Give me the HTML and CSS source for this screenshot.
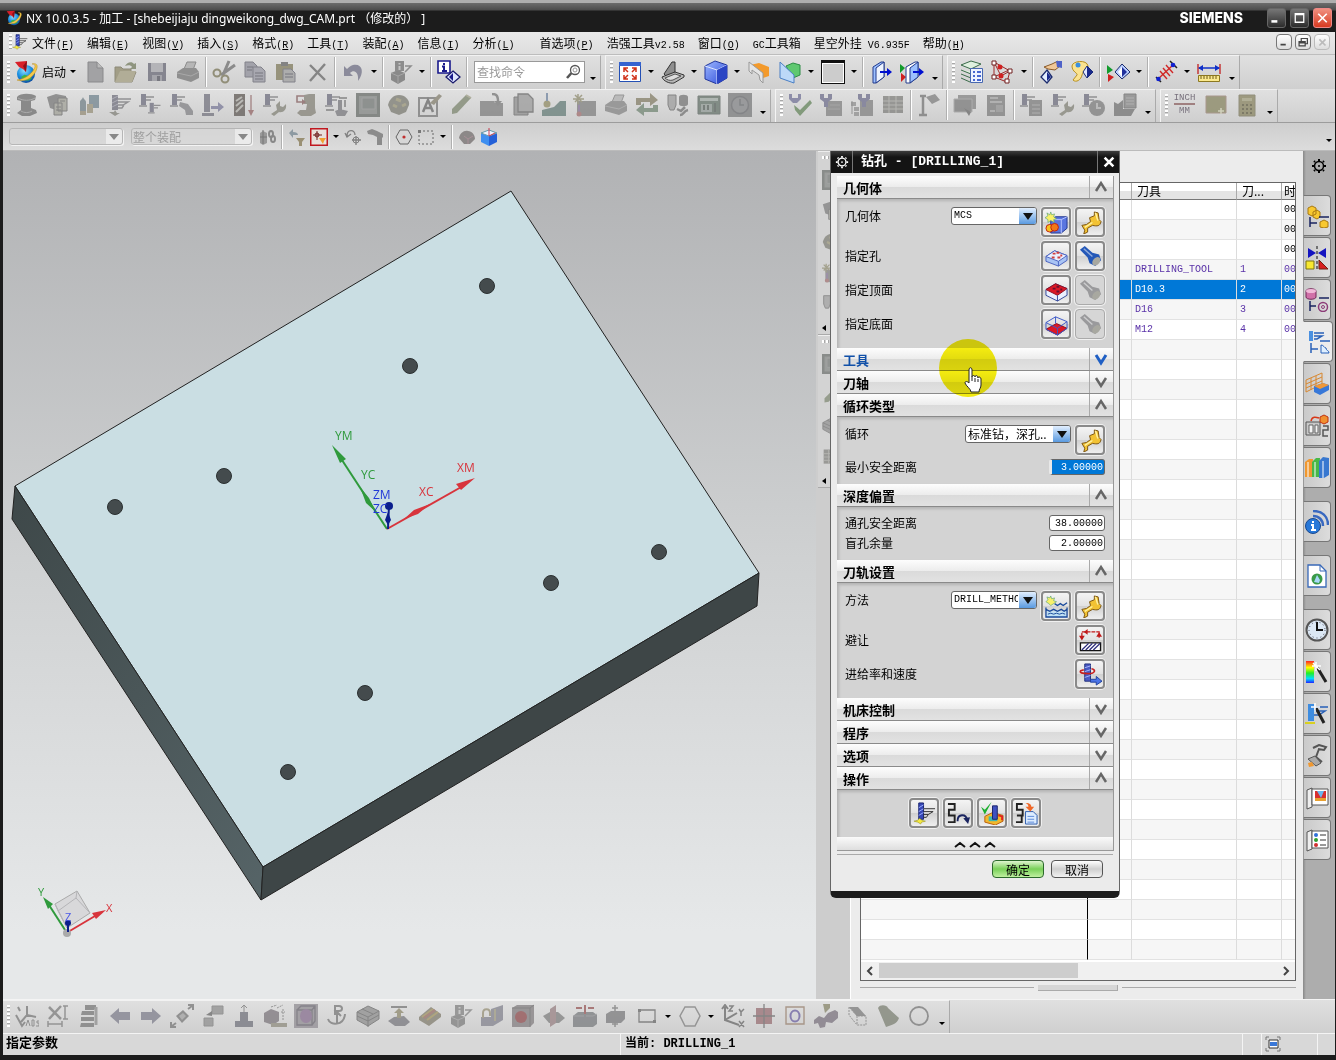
FILE: index.html
```html
<!DOCTYPE html>
<html lang="zh-CN">
<head>
  <meta charset="UTF-8">
  <meta name="viewport" content="width=device-width, initial-scale=1.0">
  <title>NX 10.0.3.5 - 加工</title>
  <link rel="stylesheet" href="styles.css">
</head>
<body>
  <!-- icon sprite -->
  <svg class="sprite" aria-hidden="true">
    <defs>
      <linearGradient id="blueCube" x1="0" y1="0" x2="1" y2="1"><stop offset="0" stop-color="#9db8ff"/><stop offset="1" stop-color="#2c49d8"/></linearGradient>
      <linearGradient id="rainbow" x1="0" y1="0" x2="0" y2="1"><stop offset="0" stop-color="#f22"/><stop offset=".3" stop-color="#ff0"/><stop offset=".55" stop-color="#2e2"/><stop offset=".8" stop-color="#0df"/><stop offset="1" stop-color="#22f"/></linearGradient>
      <radialGradient id="globe" cx=".4" cy=".3" r=".8"><stop offset="0" stop-color="#8fe0ff"/><stop offset=".5" stop-color="#1b8fe0"/><stop offset="1" stop-color="#0a3d8f"/></radialGradient>
    </defs>
    <symbol id="logo" viewBox="0 0 24 24"><circle cx="12" cy="14" r="9" fill="url(#globe)"/><path d="M7 17c3 4 8 5 11 1-3 1-5-4-8-3z" fill="#3bb34a"/><path d="M3 20c8 3 18-3 20-12 1-4-2-5-5-4 3 0 4 2 2 5-3 6-10 10-17 11z" fill="#f3c94a" stroke="#b98a1c" stroke-width=".5"/><path d="M1 2l12-1-1 11-3-3-4-2z" fill="#d8202a"/><path d="M13 1l-1 11-3-6z" fill="#8f0f18"/></symbol>
    <symbol id="bit" viewBox="0 0 24 24"><path d="M4 2h6v15H4z" fill="#7d7d88"/><path d="M4 6l6-3M4 10l6-3M4 14l6-3" stroke="#a6a6b0"/><path d="M10 6h13M10 9h10l-5 3h-5M10 15h4l2-3" fill="none" stroke="#858588" stroke-width="1.4"/><path d="M1 19h5l1-2 2 3h3l-5 3z" fill="#8d8d86"/></symbol>
    <symbol id="sbit" viewBox="0 0 24 24"><path d="M2 1h5v11H2z" fill="#7c7c8a"/><path d="M7 4h8M7 7h5M0 13h8" stroke="#858588" stroke-width="1.5"/></symbol>
    <symbol id="new" viewBox="0 0 24 24"><path d="M5 2h9l6 6v14H5z" fill="#a2a2a4" stroke="#8a8a8c"/><path d="M14 2v6h6" fill="#bbb" stroke="#8a8a8c"/></symbol>
    <symbol id="open" viewBox="0 0 24 24"><path d="M1 22V7h6l2 2h8v3h5l-4 10z" fill="#a19d86" stroke="#8d8a78"/><path d="M1 22l5-11h16l-4 11z" fill="#b1ad97"/><path d="M11 6c2-4 7-5 9-2l2-1v6h-6l2-2c-1-2-4-2-7-1z" fill="#8f957f"/></symbol>
    <symbol id="save" viewBox="0 0 24 24"><path d="M3 3h18v18H3z" fill="#85858f"/><path d="M6 3h12v9H6z" fill="#b4b4b8"/><path d="M7 15h10v6H7z" fill="#a4a4aa"/><path d="M12 16h3v5h-3z" fill="#77777f"/></symbol>
    <symbol id="print" viewBox="0 0 24 24"><path d="M8 9l3-7h9l-3 8z" fill="#b6b6b6" stroke="#8b8b8b"/><path d="M1 12l6-4h13l3 4v6l-8 4-14-4z" fill="#8f8f8f"/><path d="M1 13l14 3 8-4" fill="none" stroke="#a9a9a9"/></symbol>
    <symbol id="cut" viewBox="0 0 24 24"><path d="M17 1l-6 14M23 5L9 15" stroke="#8b8b8b" stroke-width="3"/><circle cx="5" cy="13" r="3.5" fill="none" stroke="#918e78" stroke-width="2"/><circle cx="13" cy="19" r="3.5" fill="none" stroke="#918e78" stroke-width="2"/></symbol>
    <symbol id="copy" viewBox="0 0 24 24"><path d="M2 2h8l4 4v11H2z" fill="#a2a2aa" stroke="#82828a"/><path d="M10 7h8l4 4v11H10z" fill="#a8a8b0" stroke="#82828a"/><path d="M4 7h6M4 10h5M12 13h8M12 16h8M12 19h8" stroke="#77777f"/></symbol>
    <symbol id="paste" viewBox="0 0 24 24"><path d="M2 4h17v16H2z" fill="#97937c"/><path d="M7 2h7v4H7z" fill="#838383"/><path d="M9 9h8l4 4v9H9z" fill="#adadad" stroke="#82828a"/><path d="M11 14h8M11 17h8" stroke="#77777f"/></symbol>
    <symbol id="del" viewBox="0 0 24 24"><path d="M5 5l15 15M20 4L5 21" stroke="#858585" stroke-width="2.4"/></symbol>
    <symbol id="undo" viewBox="0 0 24 24"><path d="M3 6v10h9l-3-3c4-4 9-1 8 8 7-9 4-18-5-16-3 1-4 2-6 4z" fill="#8b8b9b"/></symbol>
    <symbol id="icube" viewBox="0 0 24 24"><path d="M2 13l7-3 7 3v7l-7 4-7-4z" fill="#898989"/><path d="M2 13l7 3 7-3M9 16v8" stroke="#a5a5a5" fill="none"/><path d="M6 1h9v10H6z" fill="#8d8d8d"/><path d="M10.500 3v1.500M10.500 6v4" stroke="#c4c4c4" stroke-width="2"/><path d="M16 12l6-6h-6" fill="none" stroke="#8d8d8d" stroke-width="1.500"/></symbol>
    <symbol id="idia" viewBox="0 0 24 24"><path d="M1 1h12v12H1z" fill="#fff" stroke="#1a1a8c" stroke-width="1.600"/><path d="M7 3v2M5 6.500h2V11M5 11h5" stroke="#1a1a8c" stroke-width="2" fill="none"/><path d="M16 11l7 6-7 6-7-6z" fill="#dfe6ff" stroke="#1a1a6c" stroke-width="1.300"/><path d="M16 13v8l-4-4z" fill="#1a1a8c"/></symbol>
    <symbol id="find" viewBox="0 0 16 16"><circle cx="10" cy="6" r="4.500" fill="#fff" stroke="#555" stroke-width="1.300"/><circle cx="10" cy="6" r="2" fill="none" stroke="#999"/><path d="M6.500 9L2 14" stroke="#555" stroke-width="2.600"/></symbol>
    <symbol id="fit" viewBox="0 0 24 24"><path d="M1.500 2.500h21v19h-21z" fill="#fff" stroke="#2450b4"/><path d="M1 2h22v4H1z" fill="#3563d0"/><path d="M6 12V8h4M18 12V8h-4M6 15v4h4M18 15v4h-4M6 8l4 4M18 8l-4 4M6 19l4-4M18 19l-4-4" stroke="#d03018" stroke-width="1.500" fill="none"/></symbol>
    <symbol id="lap" viewBox="0 0 24 24"><path d="M3 14L11 2h3v10l-8 5z" fill="#8f8f8f" stroke="#333"/><path d="M1 17l5-2 8-3 9 3v2l-10 6c-4 1-11-2-12-6z" fill="#b8b8b8" stroke="#333"/><path d="M4 18l10-4 6 2-8 4c-3 1-6 0-8-2z" fill="#ddd" stroke="#555"/></symbol>
    <symbol id="cube" viewBox="0 0 24 24"><path d="M1 6l10-5 12 4v13l-10 6-12-5z" fill="url(#blueCube)" stroke="#23379c"/><path d="M1 6l12 4 10-5M13 10v14" fill="none" stroke="#dfe7ff"/><path d="M13 10l10-5v13l-10 6z" fill="#2b45c4"/></symbol>
    <symbol id="clipo" viewBox="0 0 24 24"><path d="M3 5l9-2 10 4v9l-6 2z" fill="#f39a2c"/><path d="M2 2l14 11v10l-3-3-1-5-7-5v4l-3-3z" fill="#e4e4e4" stroke="#999"/></symbol>
    <symbol id="clipg" viewBox="0 0 24 24"><path d="M8 6l7-3 7 2v10l-7 3z" fill="#5fc870" stroke="#2d8c45"/><path d="M2 2l14 13v8L2 18z" fill="#bcd8f8" stroke="#4a7fc4"/></symbol>
    <symbol id="sq" viewBox="0 0 24 24"><path d="M0 0h24v24H0z" fill="#111"/><path d="M1 3h22v20H1z" fill="#fff"/><path d="M2 4h20v18H2z" fill="#ccc"/></symbol>
    <symbol id="door" viewBox="0 0 24 24"><path d="M4 7l8-5h3v15l-8 6H4z" fill="#9cc0ff" stroke="#223a8c"/><path d="M7 8l8-6v15l-8 6z" fill="#eef4ff" stroke="#223a8c"/><path d="M11 12h8" stroke="#0010d0" stroke-width="2"/><path d="M18 8l5 4-5 4z" fill="#0010d0"/></symbol>
    <symbol id="doorg" viewBox="0 0 24 24"><path d="M0 4l5 4-5 5z" fill="#129b2c"/><path d="M1 13l5 4-5 5z" fill="#d02020"/><path d="M6 7l9-5h3v15l-8 6H6z" fill="#fff" stroke="#223a8c"/><path d="M10 8l8-6v15l-8 6z" fill="#9cc0ff" stroke="#223a8c"/><path d="M13 12h7" stroke="#0010d0" stroke-width="2"/><path d="M19 8l5 4-5 4z" fill="#0010d0"/></symbol>
    <symbol id="layers" viewBox="0 0 24 24"><path d="M1 5l10-4 10 3-10 5zM1 10l10 4 4-2M1 14l10 4M1 18l9 4" fill="#dff0df" stroke="#3b6b4a"/><path d="M10.500 8.500h12v14h-12z" fill="#eef3ff" stroke="#4868b0"/><path d="M13 12h2M17 12h4M13 16h2M17 16h4M13 20h2M17 20h4" stroke="#4868d0" stroke-width="2"/></symbol>
    <symbol id="net" viewBox="0 0 24 24"><path d="M3 2v15l13 5 3-11zM3 2l7 14 9-5M3 17l15-7" stroke="#a02828" fill="none"/><circle cx="9" cy="7" r="2.500" fill="#d02020"/><circle cx="10" cy="16" r="2.500" fill="#d02020"/><path d="M1 1h4v4H1zM1 15h4v4H1zM17 9h4v4h-4zM14 19h4v4h-4z" fill="#fff" stroke="#702020"/></symbol>
    <symbol id="handd" viewBox="0 0 24 24"><path d="M8 10l5 7-5 6-6-6z" fill="#e3eeff" stroke="#1a2a6c" stroke-width="1.300"/><path d="M8 12v9l4-4z" fill="#1a2a8c"/><path d="M5 7l8-3 6-3 2 5-5 4-7-1z" fill="#f1c898" stroke="#8a5a28"/><path d="M17 1h6v7l-5-1z" fill="#4f62c8"/></symbol>
    <symbol id="face" viewBox="0 0 24 24"><path d="M2 6c0-5 15-7 16 0 1 4-5 4-6 9-1 5-6 8-9 5l4-5c1-2-5-3-5-9z" fill="#fbe390" stroke="#b89020"/><circle cx="8" cy="5" r="2.500" fill="#3a8fe0"/><path d="M17 6l6 6-6 6-4-6z" fill="#dfe6ff" stroke="#1a2a6c"/><path d="M17 6l6 6-6 6z" fill="#1a2a8c"/></symbol>
    <symbol id="trid" viewBox="0 0 24 24"><path d="M1 5l6 5-6 4z" fill="#129b2c"/><path d="M2 14l6 3-6 5z" fill="#d02020"/><path d="M16 4l8 8-8 7-7-7z" fill="#bcd0ff" stroke="#1a2a6c"/><path d="M16 7v10l5-5z" fill="#20309c"/><path d="M16 7v10l-4-5z" fill="#fff"/></symbol>
    <symbol id="dist" viewBox="0 0 24 24"><path d="M2 17l5 5M16 1l7 7" stroke="#222" stroke-width="1.500"/><path d="M4 19L19 5M6 11l7 8M9 8l7 8M12 5l7 8" stroke="#d02828" stroke-width="1.400"/><circle cx="4.500" cy="19" r="2.300" fill="#1020d0"/><circle cx="19" cy="5" r="2.300" fill="#1020d0"/></symbol>
    <symbol id="ruler" viewBox="0 0 24 24"><path d="M1 4v10M23 4v10" stroke="#c02020" stroke-width="1.300"/><path d="M2 8h20" stroke="#1030c8" stroke-width="1.500"/><path d="M1 8l5-3v6zM23 8l-5-3v6z" fill="#1030c8"/><path d="M1.500 15.500h21v6h-21z" fill="#fbe98c" stroke="#8c7820"/><path d="M4 16v3M7 16v3M10 16v3M13 16v3M16 16v3M19 16v3" stroke="#6b5a18"/></symbol>

    <symbol id="a1" viewBox="0 0 24 24"><path d="M2 4c3-4 14-4 19-1l-1 4-4 1v7l5 2 1 3-7 3H7l-5-3 4-3V8L2 7z" fill="#7c7c7c"/><path d="M3 5c5 3 12 3 17 0M6 18c3 2 8 2 11 0" stroke="#a5a5a5" fill="none"/></symbol>
    <symbol id="a2" viewBox="0 0 24 24"><path d="M1 4l9-3 5 1 5 1v9l-7 6-9-3z" fill="#858585"/><path d="M12 5h9v13h-9zM8 10h8v12H8z" fill="#a8a8a0" stroke="#777"/><path d="M10 14h5M10 17h5M14 8h5" stroke="#777"/></symbol>
    <symbol id="a3" viewBox="0 0 24 24"><path d="M3 9c0-2 2-2 3-5 1 3 3 3 3 5v13H3z" fill="#7f8c92"/><path d="M3 18h6v4H3z" fill="#9d9684"/><path d="M12 2h10v13H12z" fill="#7f8f98"/><path d="M10 11h6v9h-6z" fill="#a09a86"/></symbol>
    <symbol id="a4" viewBox="0 0 24 24"><use href="#sbit" width="24" height="24"/><use href="#sbit" x="9" y="9" width="20" height="20"/></symbol>
    <symbol id="a5" viewBox="0 0 24 24"><use href="#sbit" width="24" height="24"/><path d="M10 9l8 2 5 7v4h-7l-1-5-6-4z" fill="#8d8d90"/></symbol>
    <symbol id="a6" viewBox="0 0 24 24"><path d="M3 1h6v18H3zM1 20h12v3H1z" fill="#80808a"/><path d="M10 13h7V9l6 5-6 5v-3h-7z" fill="#8686a0"/></symbol>
    <symbol id="a7" viewBox="0 0 24 24"><path d="M2 1h11v22H2z" fill="#6f6a66"/><path d="M4 8l6-4M4 13l7-6M4 19l7-7" stroke="#b5b5b0" stroke-width="2"/><path d="M19 2v16" stroke="#a08080" stroke-width="1.500"/><path d="M16 17h6l-3 6z" fill="#9c7474"/></symbol>
    <symbol id="wr" viewBox="0 0 24 24"><path d="M8 21l6-4-1-5 4-4v5l3 1 3-3c1 6-3 9-7 8l-5 4z" fill="#8e8e84"/></symbol>
    <symbol id="a8" viewBox="0 0 24 24"><use href="#sbit" width="24" height="24"/><use href="#wr" width="24" height="24"/></symbol>
    <symbol id="a9" viewBox="0 0 24 24"><path d="M10 2l5-1h6v14l1 5-5 3H7l-4-3 3-3h6l1-6h-3z" fill="#8f8d84"/><path d="M10 3H3v6h6" fill="none" stroke="#907070" stroke-width="1.600"/><path d="M8 6l4 3-4 3z" fill="#907070"/></symbol>
    <symbol id="a10" viewBox="0 0 24 24"><use href="#sbit" width="24" height="24"/><path d="M13 7h4v10h-4zM10 18l5-2 8 2-3 5h-8z" fill="#858589"/><path d="M1 17h8M20 7v7M14 5h8" stroke="#777" stroke-width="1.500"/></symbol>
    <symbol id="a11" viewBox="0 0 24 24"><path d="M0 0h24v24H0z" fill="#777b78"/><path d="M3 3h18v18H3z" fill="#8e918f"/><path d="M6 5h13v11H6z" fill="#818583" stroke="#999"/></symbol>
    <symbol id="a12" viewBox="0 0 24 24"><path d="M12 2c6 0 11 5 10 10l-3 7-7 3-8-3-3-7c1-5 5-10 11-10z" fill="#87877f"/><path d="M9 6l5 2M15 13l4-2M6 12l4 2" stroke="#a29e84" stroke-width="3"/></symbol>
    <symbol id="a13" viewBox="0 0 24 24"><path d="M1 5h18v18H1z" fill="none" stroke="#858585" stroke-width="2"/><path d="M5 19l5-12 5 12M7 15h6" stroke="#777" stroke-width="2.500" fill="none"/><path d="M12 10l9-9 3 2-8 9z" fill="#8f8b7c"/></symbol>
    <symbol id="a14" viewBox="0 0 24 24"><path d="M3 16L17 2l5 3L8 20l-5 1z" fill="#88907c"/><path d="M17 2l5 3" stroke="#a8a894" stroke-width="2"/></symbol>
    <symbol id="a15" viewBox="0 0 24 24"><path d="M0 8h14l1 2h8v13H0z" fill="#8a8a8a"/><path d="M12 1c5 0 6 2 6 8" stroke="#858585" stroke-width="2.500" fill="none"/><path d="M14 8h8l-4 5z" fill="#858585"/></symbol>
    <symbol id="a16" viewBox="0 0 24 24"><path d="M3 4h14v18H3z" fill="#999" stroke="#777"/><path d="M7 1h10l5 5v13H7z" fill="#a3a3a3" stroke="#777" stroke-width="1.300"/></symbol>
    <symbol id="a17" viewBox="0 0 24 24"><path d="M0 23V17l12-3 6-6h6v15z" fill="#748884"/><circle cx="5" cy="11" r="3.500" fill="#9a9674"/><path d="M5 0v8" stroke="#7f90a8" stroke-width="2"/></symbol>
    <symbol id="a18" viewBox="0 0 24 24"><path d="M4 8h19v15H4z" fill="#8b8b8b"/><path d="M5 1v10M0 6h11M2 2l7 7M9 2L2 9" stroke="#98957c" stroke-width="1.500"/><path d="M6 12v8" stroke="#9080a0" stroke-width="2"/><circle cx="6" cy="21" r="2.500" fill="#a87c7c"/></symbol>
    <symbol id="a19" viewBox="0 0 24 24"><path d="M1 12V5h14V0l8 7-8 6V9H6v3z" fill="#8f8a76"/><path d="M23 12v7H9v4l-8-6 8-7v5h9v-3z" fill="#7f9080"/></symbol>
    <symbol id="a20" viewBox="0 0 24 24"><path d="M2 2h8v10l-2 5H4l-2-5z" fill="#a5a5a5" stroke="#777"/><path d="M13 4c0-3 9-3 9 0v7c0 3-9 3-9 0z" fill="#838383"/><path d="M11 16l4 2 4-4M14 22c4 0 3-4 8-5" fill="none" stroke="#808080" stroke-width="2.500"/></symbol>
    <symbol id="a21" viewBox="0 0 24 24"><path d="M1 3h22v18H1z" fill="#748078" stroke="#6c7470"/><path d="M3 5h18v3H3z" fill="#a8b0ac"/><path d="M4 11h11v8H4z" fill="#9aa29e"/><path d="M7 12v5M11 12v5M18 10v9" stroke="#68706c" stroke-width="2"/></symbol>
    <symbol id="a22" viewBox="0 0 24 24"><path d="M0 0h24v24H0z" fill="#868788"/><circle cx="12" cy="12" r="8.500" fill="#8f9092" stroke="#76777a" stroke-width="1.500"/><path d="M12 6v6h4" stroke="#76777a" fill="none" stroke-width="1.500"/></symbol>
    <symbol id="b1" viewBox="0 0 24 24"><path d="M1 1v5l4 4h4l4-4V1h-3v4H4V1z" fill="#8080a0"/><path d="M6 12l6 5L22 7l2 3-12 13-5-6z" fill="#74906c"/></symbol>
    <symbol id="fk" viewBox="0 0 24 24"><path d="M1 1v5l4 3v5h4V9l4-3V1h-4v4H5V1z" fill="#7c7c96"/></symbol>
    <symbol id="b2" viewBox="0 0 24 24"><path d="M7 8h16v15H7z" fill="#8c8c8c"/><path d="M11 12h10M9 16h12" stroke="#9d9d9d"/><use href="#fk" width="24" height="24"/></symbol>
    <symbol id="b3" viewBox="0 0 24 24"><path d="M10 7h13v16H10z" fill="#8c8c8c"/><path d="M1 9h5v4H1zM4 14h5v4H4zM4 19h5v4H4z" fill="#999"/><path d="M2 8v13" stroke="#888"/><use href="#fk" x="7" width="24" height="24"/></symbol>
    <symbol id="b4" viewBox="0 0 24 24"><path d="M2 3h20v17H2z" fill="#8b8b88"/><path d="M2 8h20M2 12h20M2 16h20M8 3v17M15 3v17" stroke="#b0b0ac"/></symbol>
    <symbol id="b5" viewBox="0 0 24 24"><path d="M6 2v20M2 22h8M3 3h6" stroke="#838383" stroke-width="2.500"/><path d="M9 4l9-3 5 6-8 4z" fill="#8b8b8b"/></symbol>
    <symbol id="b6" viewBox="0 0 24 24"><path d="M5 2h18v14H5z" fill="#8f8f8f"/><path d="M1 6h18v13H1z" fill="#868686" stroke="#a5a5a5"/><path d="M11 15l5 8 2-4z" fill="#777"/></symbol>
    <symbol id="b7" viewBox="0 0 24 24"><path d="M3 2h18v21H3z" fill="#888"/><path d="M6 5h8M6 9h12M6 18h5" stroke="#aaa" stroke-width="2"/><path d="M12 12h7v7h-7z" fill="#9a9a9a"/></symbol>
    <symbol id="c1" viewBox="0 0 24 24"><use href="#sbit" width="24" height="24"/><path d="M9 7h13v16H9z" fill="#888"/><path d="M12 12h8M12 16h8M12 20h8" stroke="#aaa"/></symbol>
    <symbol id="c3" viewBox="0 0 24 24"><use href="#sbit" width="24" height="24"/><circle cx="15" cy="15" r="8" fill="#888"/><path d="M15 10v5h4" stroke="#b5b5b5" stroke-width="2" fill="none"/></symbol>
    <symbol id="c4" viewBox="0 0 24 24"><path d="M11 1h12v14H11z" fill="#8f8f8f" stroke="#777"/><path d="M1 9l4 2 5-4v9h12l-4 7H1z" fill="#808080"/><path d="M13 5h8M13 8h8M13 11h8" stroke="#aaa"/></symbol>
    <symbol id="d2" viewBox="0 0 24 24"><path d="M2 3h20v17H2z" fill="#929070" stroke="#a08c80"/><path d="M17 15v6M14 18h6" stroke="#d0d0b8" stroke-width="1.500"/></symbol>
    <symbol id="d3" viewBox="0 0 24 24"><path d="M4 2h16v21H4z" fill="#938f70" stroke="#85826c"/><path d="M7 5h10v3H7z" fill="#aaa88c"/><path d="M7 12h2M11 12h2M15 12h2M7 16h2M11 16h2M15 16h2M7 20h2M11 20h2M15 20h2" stroke="#6e6b55" stroke-width="2"/></symbol>

    <symbol id="s1" viewBox="0 0 18 18"><path d="M1 5l3-2 4 2v10l-4 2-3-2z" fill="#999"/><path d="M4 2v14M1 9h7" stroke="#777"/><ellipse cx="12" cy="6" rx="2" ry="3" fill="none" stroke="#888" stroke-width="2"/><ellipse cx="14" cy="11" rx="2" ry="3" fill="none" stroke="#888" stroke-width="2"/></symbol>
    <symbol id="s2" viewBox="0 0 18 18"><path d="M1 5l4-4v3c3 0 5 1 5 3H5v3z" fill="#8d9aa2"/><path d="M8 10h9l-3 4v4h-3v-4z" fill="#9a9074"/></symbol>
    <symbol id="s3" viewBox="0 0 18 18"><path d="M.75.75h16.500v16.500H.75z" fill="#e8e0dc" stroke="#c01820" stroke-width="1.500"/><path d="M7 3v9M3 7h9" stroke="#702020"/><circle cx="7" cy="7" r="2" fill="none" stroke="#702020"/><path d="M9 10h7l-2 3-1 3z" fill="#f0a030"/></symbol>
    <symbol id="s4" viewBox="0 0 18 18"><path d="M3 8c0-7 8-7 8-1M1 5l2 4 4-3M12 8v9M8 12h9" stroke="#808080" fill="none" stroke-width="1.300"/><circle cx="12" cy="12" r="3" fill="none" stroke="#808080"/></symbol>
    <symbol id="s5" viewBox="0 0 18 18"><path d="M1 3l5-2 5 2 6 3v3l-1 1v7h-5V9L7 7 2 6z" fill="#8b8b8b"/></symbol>
    <symbol id="s6" viewBox="0 0 18 18"><path d="M5 2h8l4 7-4 7H5L1 9z" fill="#d6d6d6" stroke="#666"/><circle cx="9" cy="9" r="1.600" fill="#c03030"/></symbol>
    <symbol id="s7" viewBox="0 0 18 18"><path d="M2 3h14v13H2z" fill="none" stroke="#666" stroke-dasharray="2 2"/><path d="M1 2h3v3H1z" fill="#777"/></symbol>
    <symbol id="s8" viewBox="0 0 18 18"><path d="M1 10c1-5 5-8 9-7 4 0 7 4 7 8l-5 5H6z" fill="#8c8888"/><path d="M6 8l4 3 5-3M10 11v5" stroke="#a89098" fill="none"/></symbol>
    <symbol id="s9" viewBox="0 0 18 18"><path d="M1 5l8 3v10L1 14z" fill="#3f8ff0"/><path d="M9 8l8-3v9l-8 4z" fill="#2561d8"/><path d="M1 5l8-3 8 3-8 3z" fill="#eef5ff" stroke="#69a"/><path d="M9 0v8l6-3" stroke="#d04050" fill="none"/></symbol>

    <symbol id="e1" viewBox="0 0 24 24"><path d="M12 2v9l9 2M12 11l-6 7M3 3l2 4M1 11l6 11 3-4" stroke="#858585" stroke-width="2" fill="none"/><path d="M11 22l2-6 2 6M17 16v6h2v-6zM24 17h-2v2h2v3h-3" stroke="#858585" fill="none"/></symbol>
    <symbol id="e2" viewBox="0 0 24 24"><path d="M3 3l12 12M15 2L3 15" stroke="#8a8a8a" stroke-width="2.500"/><path d="M19 2v13M17 2h5M17 15h5M2 20h14M2 17v6M16 17v6" stroke="#8a8a8a" stroke-width="1.500"/></symbol>
    <symbol id="e3" viewBox="0 0 24 24"><path d="M8 1h11v3l-2 2h-9zM5 7h12v4H4zM4 13h13v4H4zM4 19h13v4H3z" fill="#858585"/><path d="M19 3v18" stroke="#999" stroke-width="3"/></symbol>
    <symbol id="e4" viewBox="0 0 24 24"><path d="M2 12l9-8v4h11v8H11v4z" fill="#8a8a96"/></symbol>
    <symbol id="e6" viewBox="0 0 24 24"><path d="M6 12l7-6 6 6-7 7z" fill="#858585"/><path d="M9 12l4-3 3 3-4 4z" fill="#aaa"/><path d="M18 1h5v5M22 2l-4 3M6 23H1v-5M2 22l4-3" stroke="#858585" stroke-width="2" fill="none"/></symbol>
    <symbol id="e7" viewBox="0 0 24 24"><path d="M11 2h11v8H11zM3 14h9v8H3z" fill="#999" stroke="#888"/><path d="M5 11l6-4v5z" fill="#777"/></symbol>
    <symbol id="e8" viewBox="0 0 24 24"><path d="M8 8h8v9h5v6H3v-6h5z" fill="#7f8088"/><path d="M12 8V1M9 4l3-3 3 3" stroke="#858585" fill="none"/></symbol>
    <symbol id="e9" viewBox="0 0 24 24"><path d="M1 9l7-4 8 3v9l-6 4-9-3z" fill="#888388"/><path d="M8 19h16v4H8z" fill="#98958a"/><path d="M8 3l6-2M14 4l6-3M20 5v12M18 8h4" stroke="#888" stroke-dasharray="2 1"/></symbol>
    <symbol id="e10" viewBox="0 0 24 24"><path d="M0 0h24v24H0z" fill="#9a979c"/><path d="M3 6h15v15H3zM3 6l4-4h14v15l-3 4M18 6l3-4" stroke="#77747c" fill="none" stroke-width="1.300"/><ellipse cx="12" cy="12" rx="6" ry="7" fill="#917c98"/></symbol>
    <symbol id="e11" viewBox="0 0 24 24"><path d="M10 11V2h4c4 0 4 5 0 5h-3l5 5M12 8v11M3 15c2 7 16 7 17-5" stroke="#858585" fill="none" stroke-width="2"/></symbol>
    <symbol id="e12" viewBox="0 0 24 24"><path d="M1 8l11-6 11 5v8l-11 7-11-6z" fill="#989898" stroke="#777"/><path d="M1 8l11 5 11-6M1 12l11 5 11-6M12 13v10M6 5l11 5" stroke="#777" fill="none"/></symbol>
    <symbol id="e13" viewBox="0 0 24 24"><path d="M1 17l6-4 10-1 6 6-5 4H8z" fill="#85858a"/><path d="M4 3h16" stroke="#858585" stroke-width="2"/><path d="M10 14V9H7l5-5 5 5h-3v5z" fill="#98937c"/></symbol>
    <symbol id="e14" viewBox="0 0 24 24"><path d="M1 13L13 3l10 7v3l-12 9L1 16z" fill="#8d897c"/><path d="M4 13l11-8M9 16l11-8" stroke="#a89c70" stroke-width="2"/><path d="M6 14l11-8" stroke="#a07c74" stroke-width="2.500"/></symbol>
    <symbol id="e15" viewBox="0 0 24 24"><path d="M1 13h10V5l6-2 6-2v15l-10 6H1z" fill="#8e8e98"/><path d="M3 14V9c0-5 7-5 7 0v3" stroke="#a09a84" fill="none" stroke-width="2"/><path d="M15 5v12" stroke="#a5a18c" stroke-width="2"/></symbol>
    <symbol id="e16" viewBox="0 0 24 24"><path d="M1 4l5-3h17v18l-4 4H1z" fill="#8e8a8c"/><path d="M1 4h18v19M19 4l4-3" stroke="#777" fill="none"/><circle cx="10" cy="13" r="6" fill="#985e60"/></symbol>
    <symbol id="e17" viewBox="0 0 24 24"><path d="M1 12l7-4h8l7 6-6 5H7z" fill="#8b8b8b"/><path d="M8 5l6-4v18l-6 4z" fill="#a08c8e"/></symbol>
    <symbol id="e18" viewBox="0 0 24 24"><path d="M0 12l5-4h15l4 3v9l-4 3H0z" fill="#85878a"/><path d="M0 12h11M13 12h7l4-2" stroke="#9a9a9c" fill="none"/><path d="M3 4h6M21 4h-6M12 1v9" stroke="#a06868" stroke-width="2"/></symbol>
    <symbol id="e19" viewBox="0 0 24 24"><path d="M2 10l5-3h14v8l-4 4H2z" fill="#878789"/><path d="M11 1v22M8 4h6M8 20h6" stroke="#888" stroke-width="1.500"/></symbol>
    <symbol id="e20" viewBox="0 0 24 24"><path d="M4 6h16v12H4z" fill="none" stroke="#777" stroke-width="1.300"/><path d="M3 5h3v3H3zM18 16h3v3h-3z" fill="#777"/></symbol>
    <symbol id="e21" viewBox="0 0 24 24"><path d="M7 3h10l5 9-5 10H7L2 12z" fill="none" stroke="#8a8a8a" stroke-width="1.500"/></symbol>
    <symbol id="e22" viewBox="0 0 24 24"><path d="M4 3v13l14 5M4 16l12-7M1 5l3-4 3 4" stroke="#777" stroke-width="2" fill="none"/><path d="M8 2h4L8 7h4M18 5l2 3 3-3M20 8v4M18 17l5 6M23 17l-5 6" stroke="#777" stroke-width="1.500" fill="none"/></symbol>
    <symbol id="e23" viewBox="0 0 24 24"><path d="M4 4h16v16H4z" fill="#a07c80"/><path d="M12 0v24M1 12h22" stroke="#777" stroke-width="1.300"/></symbol>
    <symbol id="e24" viewBox="0 0 24 24"><path d="M3 3h18v17H3z" fill="none" stroke="#a08c7c" stroke-width="1.400"/><ellipse cx="12" cy="12" rx="4.500" ry="5.500" fill="none" stroke="#7a70a8" stroke-width="2"/></symbol>
    <symbol id="e25" viewBox="0 0 24 24"><path d="M0 16l5-4 5 2 4-5 7-3 3 2v6l-6 5-6-1-1 5-5 1-2-5-4 1z" fill="#87808a"/><path d="M9 0h7v4l-5 5z" fill="#929078"/></symbol>
    <symbol id="e26" viewBox="0 0 24 24"><path d="M4 3h9l8 9H12z" fill="#888"/><path d="M4 3v8l8 10h9v-9H12zM12 12v9" fill="none" stroke="#888" stroke-dasharray="2 1"/></symbol>
    <symbol id="e27" viewBox="0 0 24 24"><path d="M2 4c2-4 9-3 10 0l11 10c-2 6-7 7-13 9z" fill="#888c80"/></symbol>
    <symbol id="e28" viewBox="0 0 24 24"><circle cx="12" cy="12" r="9" fill="none" stroke="#858585" stroke-width="1.800"/></symbol>

    <symbol id="gear" viewBox="0 0 16 16"><circle cx="8" cy="8" r="4.500" fill="none" stroke="currentColor" stroke-width="1.500"/><circle cx="8" cy="8" r="1" fill="currentColor"/><path d="M8 1v2M8 13v2M1 8h2M13 8h2M3 3l1 1M12 12l1 1M3 13l1-1M12 4l1-1" stroke="currentColor" stroke-width="2"/></symbol>
    <symbol id="wrench" viewBox="0 0 24 24"><path d="M3 15l5-1 4-3-1-4 5-2V1l4 1 1 7 2 2c-1 5-4 5-9 4l-5 3v4l-4 2 1-4z" fill="#f2c233" stroke="#7a5410"/><path d="M17 2c2 3 1 6 3 8M6 17l8-5" stroke="#fff1a0" fill="none" stroke-width="1.500"/></symbol>
    <symbol id="geo" viewBox="0 0 24 24"><path d="M6 9l5-3h12v12l-6 5H6z" fill="#5a76e0" stroke="#24368f"/><path d="M6 9h11l6-3M17 9v14" stroke="#b9c6ff" fill="none"/><path d="M6 1l1 3 3-1-1 3 3 2-3 1 1 3-4-2-3 2V9L0 7l3-2-1-3 3 2z" fill="#f8f06a" stroke="#4a9a70" stroke-width=".6"/><circle cx="5" cy="18" r="4" fill="#f6c21c" stroke="#c02010"/><circle cx="10" cy="17" r="4" fill="#f07818" stroke="#c02010"/></symbol>
    <symbol id="holes" viewBox="0 0 24 24"><path d="M1 12l9-6 13 5v5l-9 6-13-5z" fill="#a9c4f4" stroke="#4a62c0"/><path d="M1 12l13 5 9-6-13-5z" fill="#eaf0ff" stroke="#4a62c0"/><path d="M14 17v5" stroke="#4a62c0"/><path d="M8 9h3M12 8h3M7 13h3M13 13h3M16 11h2" stroke="#d04040" stroke-width="2"/></symbol>
    <symbol id="top" viewBox="0 0 24 24"><path d="M1 11l10-6 12 5v7l-10 6-12-6z" fill="#eaf0ff" stroke="#33489c"/><path d="M1 11l12 6 10-7-12-5z" fill="#dc1826" stroke="#8c1020"/><path d="M13 17v6" stroke="#33489c"/><path d="M8 10h3M12 8h3M12 13h3M16 11h2" stroke="#6a1030" stroke-width="2"/></symbol>
    <symbol id="bottom" viewBox="0 0 24 24"><path d="M1 17l11-6 11 5-10 7z" fill="#dc1826" stroke="#8c1020"/><path d="M1 10l10-6 12 5v7l-10 7-12-6zM1 10l12 6 10-7M13 16v7M11 4v7" fill="none" stroke="#3c58c8"/></symbol>
    <symbol id="torch" viewBox="0 0 24 24"><path d="M1 5l5-4 8 7 7 2 2 6-6 6-6-3-2-6z" fill="currentColor"/><path d="M5 4l9 8" stroke="#fff" stroke-opacity=".5" stroke-width="1.500"/><ellipse cx="18" cy="17" rx="3.500" ry="5" transform="rotate(40 18 17)" class="lens"/></symbol>
    <symbol id="water" viewBox="0 0 24 24"><path d="M2 17h20v6H2z" fill="#bfe0f4"/><path d="M1 13v10h22V13M10 9l3 2 3-2 3 2 4-3M1 15l4 2 4-2 4 2 4-2 3 2 3-2" fill="none" stroke="#1a4a9c" stroke-width="1.400"/><path d="M3 20l3-1 3 1 3-1 3 1 3-1 3 1" stroke="#1a4a9c" fill="none"/><path d="M6 1l1 3 3-1-1 3 3 1-3 2-3 2-2-2-3-2 2-2-1-3 3 1z" fill="#f8f06a" stroke="#4a9a70" stroke-width=".6"/></symbol>
    <symbol id="avoid" viewBox="0 0 24 24"><path d="M3 8V3h18v6" stroke="#c01818" fill="none" stroke-width="1.300" stroke-dasharray="4 1"/><path d="M0 7h6l-3 5zM18 8h6l-3-5zM9 0v6L5 3z" fill="#c01818"/><path d="M1.500 14.500h21v8h-21z" fill="#fff" stroke="#111" stroke-width="1.400"/><path d="M3 22l7-7M7 22l7-7M11 22l7-7M15 22l7-7" stroke="#2b2b7c" stroke-width="1.400"/></symbol>
    <symbol id="feed" viewBox="0 0 24 24"><path d="M6 1h6v18H6z" fill="#4a5ac4" stroke="#20307c"/><path d="M6 5l6-2M6 9l6-2M6 15l6-2" stroke="#a9b8ff"/><path d="M13 6c5 1 4 5-3 5S0 10 2 8l3-1" fill="none" stroke="#c82020" stroke-width="1.800"/><path d="M12 17h6v-3l6 5-6 4v-3h-6z" fill="#4a74e8" stroke="#20409c"/></symbol>
    <symbol id="gen" viewBox="0 0 24 24"><path d="M6 1h5v17H6z" fill="#3748b8" stroke="#18246c"/><path d="M6 6l5-3M6 10l5-3M6 14l5-3" stroke="#9db0ff"/><path d="M11 7h12M11 10h10l-5 3h-5M11 16h3l2-3" stroke="#333" fill="none"/><path d="M1 20l4-1 2-2 2 2 4 1-4 1-1 2-3-2z" fill="#f4e840" stroke="#8a8410" stroke-width=".5"/></symbol>
    <symbol id="replay" viewBox="0 0 24 24"><path d="M1 2h7v6H2v6h6v7H1" fill="none" stroke="#222" stroke-width="2"/><path d="M11 20c0-8 9-8 10-1" fill="none" stroke="#1a2460" stroke-width="2"/><path d="M17 17l7-1-2 7z" fill="#1a2460"/></symbol>
    <symbol id="verify" viewBox="0 0 24 24"><path d="M4 15l8-4 11 3v6l-8 4-11-3z" fill="#f2b82c" stroke="#b86010"/><path d="M8 15h9v5H8z" fill="#40b8b0"/><path d="M12 4h5v14h-5z" fill="#3f51c0" stroke="#18246c"/><path d="M0 5l4 3 7-8-7 13z" fill="#1cb030"/><path d="M18 14l4 1v4" stroke="#e02020" stroke-width="2" fill="none"/></symbol>
    <symbol id="list" viewBox="0 0 24 24"><path d="M8 2H2v6h6v6H2M1 21h6v-7" fill="none" stroke="#222" stroke-width="2"/><path d="M11 10h8l4 4v9H11z" fill="#dcecff" stroke="#2c5cb0"/><path d="M13 15h7M13 18h7M13 21h7" stroke="#5a88d8"/><path d="M11 1c5 0 6 2 6 4h3l-4 5-5-5h3c0-2-1-3-3-4z" fill="#f06828"/></symbol>

    <symbol id="r1" viewBox="0 0 24 24"><path d="M3 4l4-2 4 2v6l-4 2-4-2zM8 8l4-2 3 2v5l-3 2-4-2zM15 18l4-2 4 2v5l-4 1-4-1z" fill="#f8c830" stroke="#a87810"/><path d="M5 13v10M5 19h7M14 13h10" stroke="#1a2460" stroke-width="1.500"/></symbol>
    <symbol id="r2" viewBox="0 0 24 24"><path d="M3 2l8 5-8 5zM21 2l-8 5 8 5z" fill="#1414c0"/><path d="M12 0v24" stroke="#111" stroke-dasharray="3 2"/><path d="M1 15h8v8H1z" fill="#f8e830" stroke="#7c7410"/><path d="M14 14l9 9h-9z" fill="#d82020" stroke="#702010"/></symbol>
    <symbol id="r3" viewBox="0 0 24 24"><path d="M1 3c0-3 10-3 10 0v6c0 3-10 3-10 0z" fill="#d070a8" stroke="#702858"/><ellipse cx="6" cy="3" rx="5" ry="2" fill="#f0b8d8"/><path d="M5 13v10M5 18h6M14 10h10" stroke="#1a2460" stroke-width="1.500"/><circle cx="18" cy="19" r="4.500" fill="none" stroke="#8c3c78" stroke-width="1.500"/><circle cx="18" cy="19" r="1.500" fill="none" stroke="#8c3c78"/></symbol>
    <symbol id="r4" viewBox="0 0 24 24"><path d="M3 1h4v10H3z" fill="#4a90e0"/><path d="M8 3h10M8 6h8l-5 3H8M5 13v10M5 19h7M14 11h10" stroke="#2860b8" stroke-width="1.500" fill="none"/><path d="M15 15v8h8c0-3-3-2-3-5-2 0-2-3-5-3z" fill="#e0f0ff" stroke="#2860b8"/></symbol>
    <symbol id="r5" viewBox="0 0 24 24"><path d="M1 8L17 1v11L1 20zM1 12l16-7M1 16l16-7M6 6v12M11 4v12" fill="none" stroke="#d88830"/><path d="M9 14l9-3 6 2v5l-9 5-6-3z" fill="#3878d8"/><path d="M9 14l6 3 9-4-6-2z" fill="#f09838"/></symbol>
    <symbol id="r6" viewBox="0 0 24 24"><path d="M1 8h14v13H1z" fill="#c8c8c8" stroke="#555"/><path d="M4 11h4v8H4zM10 11h3v8h-3z" fill="#f4f4f4" stroke="#666"/><path d="M18 12h5v4h-5v6h5" fill="none" stroke="#555" stroke-width="1.500"/><path d="M15 3l4-2 4 2v5l-4 2-4-2z" fill="#f09030" stroke="#c03010"/><path d="M6 7c1-5 5-4 8-3" stroke="#d83818" fill="none" stroke-width="1.500"/></symbol>
    <symbol id="r7" viewBox="0 0 24 24"><path d="M0 6l4-3h4l-1 18H0z" fill="#f09830"/><path d="M7 6l4-4h4l-1 19H7z" fill="#48b848"/><path d="M14 5l4-4 6 1v17l-5 3h-5z" fill="#3878d0"/><path d="M3 6v15M10 6v15M18 5v17" stroke="#fff"/></symbol>
    <symbol id="r8" viewBox="0 0 24 24"><path d="M8 6c6 0 10 4 10 10M8 1c9 0 15 5 15 14" fill="none" stroke="#3868c0" stroke-width="2.500"/><circle cx="8" cy="16" r="7.500" fill="#2878d8" stroke="#184890"/><path d="M8 11v2M6 15h2v5M6 20h5" stroke="#fff" stroke-width="2" fill="none"/></symbol>
    <symbol id="r9" viewBox="0 0 24 24"><path d="M3 1h12l6 6v16H3z" fill="#fff" stroke="#3868b8" stroke-width="1.300"/><path d="M15 1v6h6" fill="none" stroke="#3868b8"/><circle cx="12" cy="15" r="5.500" fill="#3a9a48"/><path d="M12 11l3 5-1 3-5-1z" fill="#a8d8f8"/></symbol>
    <symbol id="r10" viewBox="0 0 24 24"><circle cx="12" cy="12" r="10.500" fill="#dce8f4" stroke="#555" stroke-width="2"/><path d="M12 4v8h6" stroke="#111" stroke-width="2" fill="none"/><circle cx="12" cy="12" r="8" fill="none" stroke="#445" stroke-dasharray="1 3"/></symbol>
    <symbol id="r11" viewBox="0 0 24 24"><path d="M1 1h8v22H1z" fill="url(#rainbow)"/><path d="M12 7l9 15" stroke="#222" stroke-width="3"/><path d="M11 2v9M7 6h9M8 3l7 7" stroke="#fff" stroke-width="1.500"/></symbol>
    <symbol id="r12" viewBox="0 0 24 24"><path d="M3 2h6v17H3z" fill="#3d8ce0"/><path d="M9 5h14M9 9h11l-6 4H9" stroke="#2860b8" fill="none" stroke-width="1.500"/><path d="M11 6l8 15" stroke="#222" stroke-width="3"/><path d="M10 1v9M6 5h9" stroke="#fff" stroke-width="1.500"/><path d="M0 21h10" stroke="#d8d020" stroke-width="2"/></symbol>
    <symbol id="r13" viewBox="0 0 24 24"><path d="M8 4l6-3 7 2-2 3-6-1M14 5l-3 8 6 5" fill="none" stroke="#555" stroke-width="2"/><path d="M3 15l7-3 6 7-5 3z" fill="#aaa" stroke="#555"/><path d="M3 19l4-1 2 4-5 1z" fill="#f09830"/></symbol>
    <symbol id="r14" viewBox="0 0 24 24"><path d="M2 4l5-2v19l-5 2z" fill="#eee" stroke="#555"/><path d="M7 3h16v16H7z" fill="#fff" stroke="#555"/><path d="M10 5h11v10H10z" fill="#d83030"/><path d="M12 5h7l-3 7z" fill="#68b8f0"/><path d="M10 12h11v3H10z" fill="#e8a030"/></symbol>
    <symbol id="r15" viewBox="0 0 24 24"><path d="M2 4l5-2v19l-5 2z" fill="#eee" stroke="#555"/><path d="M7 3h16v17H7z" fill="#fff" stroke="#555"/><circle cx="11" cy="7" r="2" fill="#3070d8"/><circle cx="11" cy="12" r="2" fill="#30a030"/><circle cx="11" cy="17" r="2" fill="#d03030"/><path d="M15 7h6M15 12h6M15 17h6" stroke="#333"/></symbol>
  </svg>

  <header class="titlebar">
    <svg class="logo"><use href="#logo"/></svg>
    <span class="title">NX 10.0.3.5 - 加工 - [shebeijiaju dingweikong_dwg_CAM.prt （修改的） ]</span>
    <span class="brand">SIEMENS</span>
    <div class="winbtns">
      <button title="Minimize"><svg viewBox="0 0 20 20"><path d="M4 14h7" stroke="#fff" stroke-width="3"/></svg></button>
      <button title="Maximize"><svg viewBox="0 0 20 20"><path d="M5 5h10v10H5zM5 6h10" fill="none" stroke="#fff" stroke-width="1.500"/></svg></button>
      <button title="Close" class="close"><svg viewBox="0 0 20 20"><path d="M5 5l10 10M15 5L5 15" stroke="#fff" stroke-width="2"/></svg></button>
    </div>
  </header>

  <div class="frame">
    <nav class="menubar">
      <i class="grip"></i>
      <svg class="menu-icon"><use href="#gen"/></svg>
      <a href="#">文件<span class="mono">(<u>F</u>)</span></a>
      <a href="#">编辑<span class="mono">(<u>E</u>)</span></a>
      <a href="#">视图<span class="mono">(<u>V</u>)</span></a>
      <a href="#">插入<span class="mono">(<u>S</u>)</span></a>
      <a href="#">格式<span class="mono">(<u>R</u>)</span></a>
      <a href="#">工具<span class="mono">(<u>T</u>)</span></a>
      <a href="#">装配<span class="mono">(<u>A</u>)</span></a>
      <a href="#">信息<span class="mono">(<u>I</u>)</span></a>
      <a href="#" class="wide">分析<span class="mono">(<u>L</u>)</span></a>
      <a href="#">首选项<span class="mono">(<u>P</u>)</span></a>
      <a href="#">浩强工具<span class="mono">v2.58</span></a>
      <a href="#">窗口<span class="mono">(<u>O</u>)</span></a>
      <a href="#"><span class="mono">GC</span>工具箱</a>
      <a href="#">星空外挂<span class="mono"> V6.935F</span></a>
      <a href="#">帮助<span class="mono">(<u>H</u>)</span></a>
      <div class="mdi">
        <button title="Minimize"><svg viewBox="0 0 16 16"><path d="M4 11h6" stroke="#444" stroke-width="2"/></svg></button>
        <button title="Restore"><svg viewBox="0 0 16 16"><path d="M6 7V4h7v6h-2M3.500 7.500h7v5h-7zM4 9h6" fill="none" stroke="#444" stroke-width="1.400"/></svg></button>
        <button title="Close" disabled><svg viewBox="0 0 16 16"><path d="M5 5l7 7M12 5l-7 7" stroke="#bbb" stroke-width="2"/></svg></button>
      </div>
    </nav>

    <div class="toolrow">
      <div class="group">
        <i class="grip"></i>
        <button class="start"><svg><use href="#logo"/></svg>启动<i class="tri"></i></button>
        <button title="New"><svg><use href="#new"/></svg></button>
        <button title="Open"><svg><use href="#open"/></svg></button>
        <button title="Save"><svg><use href="#save"/></svg></button>
        <button title="Print"><svg><use href="#print"/></svg></button>
        <i class="sep"></i>
        <button title="Cut"><svg><use href="#cut"/></svg></button>
        <button title="Copy"><svg><use href="#copy"/></svg></button>
        <button title="Paste"><svg><use href="#paste"/></svg></button>
        <button title="Delete"><svg><use href="#del"/></svg></button>
        <i class="sep"></i>
        <button title="Undo"><svg><use href="#undo"/></svg></button>
        <button class="drop" title="Undo list"></button>
        <i class="sep"></i>
        <button title="Properties"><svg><use href="#icube"/></svg></button>
        <button class="drop" title="Properties list"></button>
        <i class="sep"></i>
        <button title="Information"><svg><use href="#idia"/></svg></button>
        <i class="sep"></i>
        <label class="search"><input type="text" placeholder="查找命令" aria-label="查找命令"><svg><use href="#find"/></svg></label>
        <button class="drop low" title="More"></button>
      </div>
      <div class="group">
        <i class="grip"></i>
        <button title="Fit"><svg><use href="#fit"/></svg></button>
        <button class="drop" title="Fit list"></button>
        <button title="Orient"><svg><use href="#lap"/></svg></button>
        <button class="drop" title="Orient list"></button>
        <button title="Shaded"><svg><use href="#cube"/></svg></button>
        <button class="drop" title="Shaded list"></button>
        <button title="Clip section"><svg><use href="#clipo"/></svg></button>
        <button title="Edit section"><svg><use href="#clipg"/></svg></button>
        <button class="drop" title="Section list"></button>
        <button title="Background"><svg><use href="#sq"/></svg></button>
        <button class="drop" title="Background list"></button>
        <i class="sep"></i>
        <button title="Show"><svg><use href="#door"/></svg></button>
        <button title="Show and hide"><svg><use href="#doorg"/></svg></button>
        <button class="drop low" title="More"></button>
      </div>
      <div class="group">
        <i class="grip"></i>
        <button title="Layers"><svg><use href="#layers"/></svg></button>
        <button title="WCS"><svg><use href="#net"/></svg></button>
        <button class="drop" title="WCS list"></button>
        <i class="sep"></i>
        <button title="Pick"><svg><use href="#handd"/></svg></button>
        <button title="Display"><svg><use href="#face"/></svg></button>
        <i class="sep"></i>
        <button title="Hide"><svg><use href="#trid"/></svg></button>
        <button class="drop" title="Hide list"></button>
        <i class="sep"></i>
        <button title="Distance"><svg><use href="#dist"/></svg></button>
        <button class="drop" title="Distance list"></button>
        <button title="Ruler"><svg><use href="#ruler"/></svg></button>
        <button class="drop low" title="More"></button>
      </div>
    </div>

    <div class="toolrow second">
      <div class="group">
        <i class="grip"></i>
        <button title="Create program"><svg><use href="#a1"/></svg></button>
        <button title="Create tool"><svg><use href="#a2"/></svg></button>
        <button title="Create geometry"><svg><use href="#a3"/></svg></button>
        <button title="Create operation"><svg><use href="#bit"/></svg></button>
        <button title="Generate"><svg><use href="#a4"/></svg></button>
        <button title="Parallel generate"><svg><use href="#a5"/></svg></button>
        <button title="Replay"><svg><use href="#a6"/></svg></button>
        <button title="Divide"><svg><use href="#a7"/></svg></button>
        <button title="Edit"><svg><use href="#a8"/></svg></button>
        <button title="Verify"><svg><use href="#a9"/></svg></button>
        <button title="Transform"><svg><use href="#a10"/></svg></button>
        <button title="Workpiece"><svg><use href="#a11"/></svg></button>
        <button title="Simulate"><svg><use href="#a12"/></svg></button>
        <button title="Text"><svg><use href="#a13"/></svg></button>
        <button title="Feed"><svg><use href="#a14"/></svg></button>
        <button title="Output"><svg><use href="#a15"/></svg></button>
        <button title="Documents"><svg><use href="#a16"/></svg></button>
        <button title="Gouge check"><svg><use href="#a17"/></svg></button>
        <button title="Collision check"><svg><use href="#a18"/></svg></button>
        <button title="Shop print"><svg><use href="#print"/></svg></button>
        <button title="Synchronize"><svg><use href="#a19"/></svg></button>
        <button title="Tool library"><svg><use href="#a20"/></svg></button>
        <button title="Machine"><svg><use href="#a21"/></svg></button>
        <button title="Time"><svg><use href="#a22"/></svg></button>
        <button class="drop low" title="More"></button>
      </div>
      <div class="group">
        <i class="grip"></i>
        <button title="Check tool"><svg><use href="#b1"/></svg></button>
        <button title="Tool holder"><svg><use href="#b2"/></svg></button>
        <button title="Tool tree"><svg><use href="#b3"/></svg></button>
        <button title="Tool table"><svg><use href="#b4"/></svg></button>
        <i class="sep"></i>
        <button title="Probe"><svg><use href="#b5"/></svg></button>
        <i class="sep"></i>
        <button title="Windows"><svg><use href="#b6"/></svg></button>
        <button title="Report"><svg><use href="#b7"/></svg></button>
        <i class="sep"></i>
        <button title="Operation list"><svg><use href="#c1"/></svg></button>
        <button title="Operation edit"><svg><use href="#a8"/></svg></button>
        <button title="Operation time"><svg><use href="#c3"/></svg></button>
        <button title="Post process"><svg><use href="#c4"/></svg></button>
        <button class="drop low" title="More"></button>
      </div>
      <div class="group">
        <i class="grip"></i>
        <button class="units" title="Units"><span>INCH</span><span>MM</span></button>
        <button title="Add plate"><svg><use href="#d2"/></svg></button>
        <button title="Calculator"><svg><use href="#d3"/></svg></button>
        <button class="drop low" title="More"></button>
      </div>
    </div>

    <div class="selectbar">
      <span class="flatselect"><select disabled aria-label="Type filter"><option></option></select></span>
      <span class="flatselect scope"><select disabled aria-label="Scope"><option>整个装配</option></select></span>
      <button title="Interpart"><svg><use href="#s1"/></svg></button>
      <i class="sep"></i>
      <button title="Reset filter"><svg><use href="#s2"/></svg></button>
      <button title="Snap"><svg><use href="#s3"/></svg></button>
      <button class="drop" title="Snap list"></button>
      <button title="Rotate point"><svg><use href="#s4"/></svg></button>
      <button title="Follow"><svg><use href="#s5"/></svg></button>
      <i class="sep"></i>
      <button title="Polygon"><svg><use href="#s6"/></svg></button>
      <button title="Rectangle"><svg><use href="#s7"/></svg></button>
      <button class="drop" title="Rectangle list"></button>
      <i class="sep"></i>
      <button title="Shell"><svg><use href="#s8"/></svg></button>
      <button title="Solid"><svg><use href="#s9"/></svg></button>
      <button class="drop last" title="More"></button>
    </div>

    <main class="work">
      <section class="viewport">
        <svg viewBox="3 151 813 847" preserveAspectRatio="xMinYMin meet">
          <defs>
            <linearGradient id="sideL" x1="0" y1="0" x2="1" y2="1"><stop offset="0" stop-color="#3e4849"/><stop offset="1" stop-color="#566467"/></linearGradient>
            <pattern id="hatch" width="2" height="2" patternUnits="userSpaceOnUse"><path d="M0 0h2v2H0z" fill="#4a5153"/><path d="M1 0v2" stroke="#3d4446"/></pattern>
          </defs>
          <path d="M511 191L759 573 263 867 15 486z" fill="#cadee3" stroke="#222"/>
          <path d="M15 486L263 867 261 900 12 519z" fill="url(#sideL)" stroke="#222"/>
          <path d="M263 867L759 573 757 606 261 900z" fill="#3e4647" stroke="#222"/>
          <g fill="url(#hatch)" stroke="#2b3031">
            <circle cx="487" cy="286" r="7.500"/><circle cx="410" cy="366" r="7.500"/>
            <circle cx="224" cy="476" r="7.500"/><circle cx="115" cy="507" r="7.500"/>
            <circle cx="659" cy="552" r="7.500"/><circle cx="551" cy="583" r="7.500"/>
            <circle cx="365" cy="693" r="7.500"/><circle cx="288" cy="772" r="7.500"/>
          </g>
          <!-- machine and work axes -->
          <path d="M387 529L340 457" stroke="#2f9a3c" stroke-width="2"/>
          <path d="M332 445l14 14-6 4zM360 487l9 11 7 14-10-9z" fill="#2f9a3c"/>
          <path d="M387 529l76-43" stroke="#d8343c" stroke-width="2"/>
          <path d="M475 478l-14 12-5-6zM430 504l-12 10-14 5 10-9z" fill="#d8343c"/>
          <path d="M388 529l1-24" stroke="#0a1e8c" stroke-width="2"/>
          <circle cx="389" cy="506" r="4" fill="#0a1e8c"/><path d="M385 520l3-8 3 8-3 5z" fill="#0a1e8c"/>
          <g class="axis">
            <text x="335" y="440" fill="#2f9a3c">YM</text><text x="361" y="479" fill="#2f9a3c">YC</text>
            <text x="457" y="472" fill="#d8343c">XM</text><text x="419" y="496" fill="#d8343c">XC</text>
            <text x="373" y="499" fill="#2038d8">ZM</text><text x="373" y="513" fill="#2038d8">ZC</text>
          </g>
          <!-- view triad -->
          <path d="M55 904l22-13 13 22-23 15z" fill="#d8d8da" stroke="#aaa"/>
          <path d="M58 911l18-13 14 15M55 904l3 7 9 17M77 891l-1 7" fill="none" stroke="#b5b5b8"/>
          <path d="M67 933L49 905" stroke="#2f9a3c" stroke-width="2"/><path d="M43 897l10 7-5 5z" fill="#2f9a3c"/>
          <path d="M68 932l27-16" stroke="#d8343c" stroke-width="2"/><path d="M106 910l-10 9-4-6z" fill="#d8343c"/>
          <circle cx="67" cy="933" r="4" fill="#aaa"/>
          <path d="M68 932v-10" stroke="#0a1e8c" stroke-width="2"/><circle cx="68" cy="923" r="3" fill="#0a1e8c"/>
          <g class="axis small">
            <text x="38" y="896" fill="#2f9a3c">Y</text><text x="106" y="912" fill="#d8343c">X</text><text x="65" y="921" fill="#4a58e8">Z</text>
          </g>
        </svg>
      </section>

      <aside class="sidetools">
        <div class="vgroup">
          <i class="grip"></i>
          <svg><use href="#a11"/></svg><svg><use href="#a2"/></svg><svg><use href="#a12"/></svg><svg><use href="#a18"/></svg><svg><use href="#a20"/></svg>
          <button title="More"></button>
        </div>
        <div class="vgroup">
          <i class="grip"></i>
          <svg><use href="#a11"/></svg><svg><use href="#a14"/></svg><svg><use href="#e12"/></svg><svg><use href="#b4"/></svg>
          <button title="More"></button>
        </div>
      </aside>

      <section class="navigator">
        <div class="tablebox">
          <div class="rows">
            <table>
              <colgroup><col class="c-name"><col class="c-path"><col class="c-tool"><col class="c-num"><col></colgroup>
              <thead><tr><th></th><th></th><th>刀具</th><th>刀...</th><th>时间</th></tr></thead>
              <tbody id="ops">
                <tr><td></td><td></td><td></td><td></td><td>00:00</td></tr>
                <tr><td></td><td></td><td></td><td></td><td>00:00</td></tr>
                <tr><td></td><td></td><td></td><td></td><td>00:00</td></tr>
                <tr class="op"><td></td><td></td><td>DRILLING_TOOL</td><td>1</td><td>00:00</td></tr>
                <tr class="op current"><td></td><td></td><td>D10.3</td><td>2</td><td>00:00</td></tr>
                <tr class="op"><td></td><td></td><td>D16</td><td>3</td><td>00:00</td></tr>
                <tr class="op"><td></td><td></td><td>M12</td><td>4</td><td>00:00</td></tr>
              </tbody>
            </table>
          </div>
          <div class="hscroll">
            <button title="Left"><svg viewBox="0 0 10 10"><path d="M7 1L3 5l4 4" fill="none" stroke="#444" stroke-width="2"/></svg></button>
            <div class="track"><div class="thumb"></div></div>
            <button title="Right"><svg viewBox="0 0 10 10"><path d="M3 1l4 4-4 4" fill="none" stroke="#444" stroke-width="2"/></svg></button>
          </div>
        </div>
        <div class="splitter"><i></i></div>
      </section>

      <aside class="resources">
        <button class="opts" title="Options"><svg><use href="#gear"/></svg></button>
        <button title="Assembly navigator"><svg><use href="#r1"/></svg></button>
        <button title="Constraint navigator"><svg><use href="#r2"/></svg></button>
        <button title="Part navigator"><svg><use href="#r3"/></svg></button>
        <button title="Operation navigator" class="active"><svg><use href="#r4"/></svg></button>
        <button title="Machining features"><svg><use href="#r5"/></svg></button>
        <button title="Machine tools"><svg><use href="#r6"/></svg></button>
        <button title="Reuse library"><svg><use href="#r7"/></svg></button>
        <button title="HD3D" class="apart"><svg><use href="#r8"/></svg></button>
        <button title="Web" class="apart"><svg><use href="#r9"/></svg></button>
        <button title="History" class="apart"><svg><use href="#r10"/></svg></button>
        <button title="Materials"><svg><use href="#r11"/></svg></button>
        <button title="Process studio"><svg><use href="#r12"/></svg></button>
        <button title="Wizards"><svg><use href="#r13"/></svg></button>
        <button title="Roles"><svg><use href="#r14"/></svg></button>
        <button title="Templates"><svg><use href="#r15"/></svg></button>
      </aside>

      <form class="dialog" onsubmit="return false">
        <div class="dlg-title">
          <button type="button" title="Options"><svg><use href="#gear"/></svg></button>
          <h2>钻孔 - [DRILLING_1]</h2>
          <button type="button" title="Close" class="x"><svg viewBox="0 0 16 16"><path d="M3 3l10 10M13 3L3 13" stroke="#fff" stroke-width="3"/></svg></button>
        </div>
        <div class="dlg-body">
          <button type="button" class="sect up">几何体</button>
          <div class="fields">
            <div class="row first">
              <label for="geom">几何体</label>
              <span class="combo"><select id="geom"><option>MCS</option></select></span>
              <button type="button" title="New geometry"><svg><use href="#geo"/></svg></button>
              <button type="button" title="Edit geometry"><svg><use href="#wrench"/></svg></button>
            </div>
            <div class="row"><span>指定孔</span>
              <button type="button" title="Holes"><svg><use href="#holes"/></svg></button>
              <button type="button" title="Show holes" class="blue"><svg><use href="#torch"/></svg></button>
            </div>
            <div class="row"><span>指定顶面</span>
              <button type="button" title="Top face"><svg><use href="#top"/></svg></button>
              <button type="button" title="Show top" disabled><svg><use href="#torch"/></svg></button>
            </div>
            <div class="row"><span>指定底面</span>
              <button type="button" title="Bottom face"><svg><use href="#bottom"/></svg></button>
              <button type="button" title="Show bottom" disabled><svg><use href="#torch"/></svg></button>
            </div>
          </div>
          <button type="button" class="sect hot">工具</button>
          <button type="button" class="sect">刀轴</button>
          <button type="button" class="sect up">循环类型</button>
          <div class="fields">
            <div class="row first">
              <label for="cycle">循环</label>
              <span class="combo long"><select id="cycle"><option>标准钻，深孔..</option></select></span>
              <button type="button" title="Edit cycle"><svg><use href="#wrench"/></svg></button>
            </div>
            <div class="row"><label for="clear">最小安全距离</label><input id="clear" class="picked" type="text" value="3.00000"></div>
          </div>
          <button type="button" class="sect up">深度偏置</button>
          <div class="fields">
            <div class="row"><label for="thru">通孔安全距离</label><input id="thru" type="text" value="38.00000"></div>
            <div class="row"><label for="blind">盲孔余量</label><input id="blind" type="text" value="2.00000"></div>
          </div>
          <button type="button" class="sect up">刀轨设置</button>
          <div class="fields">
            <div class="row first">
              <label for="method">方法</label>
              <span class="combo"><select id="method"><option>DRILL_METHOD</option></select></span>
              <button type="button" title="New method"><svg><use href="#water"/></svg></button>
              <button type="button" title="Edit method"><svg><use href="#wrench"/></svg></button>
            </div>
            <div class="row"><span>避让</span><button type="button" title="Avoidance"><svg><use href="#avoid"/></svg></button></div>
            <div class="row"><span>进给率和速度</span><button type="button" title="Feeds"><svg><use href="#feed"/></svg></button></div>
          </div>
          <button type="button" class="sect">机床控制</button>
          <button type="button" class="sect">程序</button>
          <button type="button" class="sect">选项</button>
          <button type="button" class="sect up">操作</button>
          <div class="fields actions">
            <button type="button" title="Generate"><svg><use href="#gen"/></svg></button>
            <button type="button" title="Replay"><svg><use href="#replay"/></svg></button>
            <button type="button" title="Verify"><svg><use href="#verify"/></svg></button>
            <button type="button" title="List"><svg><use href="#list"/></svg></button>
          </div>
          <button type="button" class="collapse" title="Collapse"><svg viewBox="0 0 42 8"><path d="M1 7l5-4 5 4M16 7l5-4 5 4M31 7l5-4 5 4" fill="none" stroke="#111" stroke-width="2"/></svg></button>
        </div>
        <div class="dlg-foot">
          <button type="submit" class="ok">确定</button>
          <button type="button">取消</button>
        </div>
      </form>

      <div class="highlight"></div>
      <svg class="hand" viewBox="0 0 20 26"><path d="M6 15V3c0-3 3-3 3 0v7c0-2 3-2 3 0 0-2 3-2 3 1 0-2 3-1 3 1v6c0 3-2 4-2 7H8c0-3-5-6-6-9 0-2 2-2 4 0z" fill="#fff" stroke="#222"/><path d="M9 10v4M12 11v4M15 12v3" stroke="#222"/></svg>
    </main>

    <div class="toolrow bottom">
      <div class="group">
        <i class="grip"></i>
        <button title="Absolute CSYS"><svg><use href="#e1"/></svg></button>
        <button title="Delete dimension"><svg><use href="#e2"/></svg></button>
        <button title="Stack"><svg><use href="#e3"/></svg></button>
        <button title="Back"><svg><use href="#e4"/></svg></button>
        <button title="Forward" class="flip"><svg><use href="#e4"/></svg></button>
        <button title="Scale"><svg><use href="#e6"/></svg></button>
        <button title="Move"><svg><use href="#e7"/></svg></button>
        <button title="Extrude"><svg><use href="#e8"/></svg></button>
        <button title="Block"><svg><use href="#e9"/></svg></button>
        <button title="Bounding body"><svg><use href="#e10"/></svg></button>
        <button title="Radius"><svg><use href="#e11"/></svg></button>
        <button title="Mesh"><svg><use href="#e12"/></svg></button>
        <button title="Offset face"><svg><use href="#e13"/></svg></button>
        <button title="Sheet"><svg><use href="#e14"/></svg></button>
        <button title="Body info"><svg><use href="#icube"/></svg></button>
        <button title="Lock"><svg><use href="#e15"/></svg></button>
        <button title="Sphere"><svg><use href="#e16"/></svg></button>
        <button title="Datum plane"><svg><use href="#e17"/></svg></button>
        <button title="Split"><svg><use href="#e18"/></svg></button>
        <button title="Resize"><svg><use href="#e19"/></svg></button>
        <button title="Rectangle"><svg><use href="#e20"/></svg></button>
        <button class="drop" title="Rectangle list"></button>
        <button title="Polygon"><svg><use href="#e21"/></svg></button>
        <button class="drop" title="Polygon list"></button>
        <button title="CSYS"><svg><use href="#e22"/></svg></button>
        <button title="Centre"><svg><use href="#e23"/></svg></button>
        <button title="Hole"><svg><use href="#e24"/></svg></button>
        <button title="Pattern"><svg><use href="#e25"/></svg></button>
        <button title="Draft"><svg><use href="#e26"/></svg></button>
        <button title="Cone"><svg><use href="#e27"/></svg></button>
        <button title="Circle"><svg><use href="#e28"/></svg></button>
        <button class="drop low" title="More"></button>
      </div>
    </div>

    <footer class="status">
      <span class="cue">指定参数</span>
      <span class="now">当前: DRILLING_1</span>
      <span class="cell"></span>
      <span class="cell screen"><svg viewBox="0 0 16 16"><path d="M1 4V1h3M12 1h3v3M15 12v3h-3M4 15H1v-3" fill="none" stroke="#777"/><path d="M4 4h9v8H4z" fill="#fff" stroke="#333"/><path d="M5 6h7v4H5z" fill="#3a78d8"/></svg></span>
      <span class="cell end"></span>
    </footer>
  </div>

  <script>
    // pad the list with blank rows so the grid runs to the bottom
    const ops = document.getElementById("ops");
    for (let i = 0; i < 31; i++) {
      const tr = document.createElement("tr");
      tr.innerHTML = "<td></td><td></td><td></td><td></td><td></td>";
      ops.appendChild(tr);
    }
  </script>
</body>
</html>
```
FILE: styles.css
```css
* {
  box-sizing: border-box;
}
body {
  margin: 0;
  height: 100vh;
  min-height: 1060px;
  display: flex;
  flex-direction: column;
  background: #1c1c1c;
  border-top: 3px solid #aeaeae;
  font-family: "Noto Sans CJK SC", sans-serif;
  font-size: 12px;
  color: #000;
  overflow: hidden;
}
button {
  border: none;
  background: none;
  padding: 0;
  margin: 0;
  font: inherit;
  color: inherit;
  display: flex;
  align-items: center;
  justify-content: center;
  flex-shrink: 0;
}
.sprite {
  position: absolute;
  width: 0;
  height: 0;
}
.mono {
  font-family: "Liberation Mono", monospace;
  font-size: 10px;
  white-space: pre;
}

/* title bar */
.titlebar {
  display: flex;
  align-items: center;
  height: 29px;
  padding: 0 4px 0 6px;
  background: linear-gradient(#6c6c6c 0, #4c4c4c 7px, #1c1c1c 8px, #1c1c1c 100%);
  color: #fff;
}
.logo {
  width: 16px;
  height: 16px;
}
.title {
  flex: 1;
  margin-left: 4px;
  font-family: "Noto Sans", "Noto Sans CJK SC", sans-serif;
  white-space: pre;
}
.brand {
  font-family: Inter, sans-serif;
  font-size: 14px;
  font-weight: 800;
  margin-right: 24px;
}
.winbtns {
  display: flex;
  gap: 4px;
}
.winbtns button {
  width: 19px;
  height: 20px;
  border-radius: 3px;
  border: 1px solid #666;
  background: linear-gradient(#777, #2c2c2c);
}
.winbtns .close {
  border-color: #e88;
  background: linear-gradient(#f09080, #d83a20);
}
.winbtns svg {
  width: 18px;
  height: 18px;
}

.frame {
  flex: 1;
  min-height: 0;
  display: flex;
  flex-direction: column;
  margin: 0 1px 5px 3px;
  background: #dadada;
}

/* menu */
.menubar {
  display: flex;
  align-items: center;
  height: 23px;
  flex-shrink: 0;
  padding: 0 5px 2px 2px;
  background: linear-gradient(#e9e9e9, #dedede);
  border-bottom: 1px solid #bdbdbd;
}
.menubar a {
  color: #000;
  text-decoration: none;
  margin-right: 13px;
  white-space: nowrap;
}
.menubar .wide {
  margin-right: 25px;
}
.menu-icon {
  width: 16px;
  height: 16px;
  margin: 0 4px 0 0;
}
.grip {
  width: 3px;
  height: 22px;
  margin: 0 1px 0 4px;
  flex-shrink: 0;
  background: repeating-linear-gradient(#fff 0, #fff 2px, #a8a8a8 2px, #a8a8a8 3px, transparent 3px, transparent 4px);
}
.menubar .grip {
  height: 16px;
  margin-right: 0;
}
.mdi {
  display: flex;
  gap: 3px;
  margin-left: auto;
}
.mdi button {
  width: 16px;
  height: 16px;
  border: 1px solid #777;
  border-radius: 4px;
  background: linear-gradient(#fff, #ddd);
}
.mdi button:disabled {
  border-color: #bbb;
}
.mdi svg {
  width: 14px;
  height: 14px;
}

/* toolbars */
.toolrow {
  display: flex;
  gap: 4px;
  height: 34px;
  flex-shrink: 0;
  background: linear-gradient(#e0e0e0, #cfcfcf);
}
.second {
  border-bottom: 1px solid #9c9c9c;
}
.group {
  display: flex;
  align-items: center;
  padding-bottom: 2px;
  border-right: 1px solid #aaa;
  border-top: 1px solid #f2f2f2;
}
.group + .group {
  border-left: 1px solid #f4f4f4;
}
.group button {
  width: 31px;
  height: 30px;
}
.group svg {
  width: 24px;
  height: 24px;
}
.second svg,
.bottom svg {
  opacity: .85;
}
.sep {
  width: 5px;
  height: 30px;
  flex-shrink: 0;
  background: linear-gradient(90deg, transparent 2px, #b0b0b0 2px, #b0b0b0 3px, #fff 3px, #fff 4px, transparent 4px);
}
.tri,
.drop::after {
  content: "";
  border: 3px solid transparent;
  border-top-color: #000;
  border-bottom: none;
}
.group .drop,
.selectbar .drop {
  width: 12px;
}
.group .drop.low {
  width: 15px;
  padding-top: 14px;
}
.group .start {
  width: 68px;
  gap: 4px;
}
.group .search {
  display: flex;
  align-items: center;
  width: 111px;
  height: 22px;
  margin-left: 5px;
  padding-right: 3px;
  background: #fff;
  border: 1px solid #999;
}
.search input {
  flex: 1;
  min-width: 0;
  border: none;
  padding: 0 2px;
  background: none;
  font: inherit;
}
.search input::placeholder {
  color: #999;
}
.group .search svg {
  width: 16px;
  height: 16px;
}
.group .units {
  flex-direction: column;
  font-family: "Liberation Mono", monospace;
  font-size: 9px;
  line-height: 9px;
  color: #77707c;
}
.units span:first-child {
  border-bottom: 2px solid #a08080;
  margin-bottom: 2px;
}
.flip svg {
  transform: scaleX(-1);
}

/* selection bar */
.selectbar {
  display: flex;
  align-items: center;
  height: 28px;
  flex-shrink: 0;
  padding-left: 6px;
  background: linear-gradient(#cecece, #dcdcdc);
  border-bottom: 1px solid #bbb;
}
.selectbar button {
  width: 22px;
}
.selectbar svg {
  width: 18px;
  height: 18px;
}
.selectbar .sep {
  width: 7px;
  height: 24px;
}
.selectbar .last {
  margin-left: auto;
  margin-top: 8px;
}
.flatselect {
  position: relative;
  display: flex;
  width: 114px;
  height: 17px;
  margin-right: 8px;
}
.scope {
  width: 121px;
  margin-right: 5px;
}
.flatselect select {
  appearance: none;
  width: 100%;
  height: 17px;
  padding: 0 20px 0 1px;
  border: 1px solid #aaa;
  border-radius: 3px;
  background: linear-gradient(#f4f4f4, #f4f4f4) right / 16px 100% no-repeat #d8d8d8;
  box-shadow: 1px 1px 0 #fff;
  font: inherit;
  line-height: 15px;
  color: #888;
}
.flatselect::after {
  content: "";
  position: absolute;
  right: 4px;
  top: 6px;
  border: 5px solid transparent;
  border-top: 6px solid #888;
  border-bottom: none;
}

/* work area */
.work {
  position: relative;
  flex: 1;
  min-height: 0;
  display: flex;
}
.viewport {
  flex: 1;
  min-width: 0;
  overflow: hidden;
  background: linear-gradient(#b1b2b4 0, #cfd1d2 48%, #e6e8e9 92%);
}
.viewport > svg {
  display: block;
  width: 100%;
}
.axis {
  font-family: "Open Sans", sans-serif;
  font-size: 12px;
}
.small {
  font-size: 11px;
}
.sidetools {
  width: 34px;
  padding-left: 2px;
  background: #cdcdcd;
}
.vgroup {
  display: flex;
  flex-direction: column;
  align-items: flex-start;
  gap: 11px;
  padding: 4px 0 3px 4px;
  border-top: 1px solid #eee;
  border-bottom: 1px solid #aaa;
  background: #d3d3d3;
}
.vgroup .grip {
  width: 22px;
  height: 3px;
  margin: 0;
  background: repeating-linear-gradient(90deg, #fff 0, #fff 2px, #a8a8a8 2px, #a8a8a8 3px, transparent 3px, transparent 4px);
}
.vgroup svg {
  width: 20px;
  height: 20px;
  opacity: .8;
}
.vgroup button::after {
  content: "";
  border: 3px solid transparent;
  border-right: 4px solid #000;
  border-left: none;
}

/* operation navigator */
.navigator {
  width: 453px;
  display: flex;
  flex-direction: column;
  padding: 31px 7px 5px 9px;
  background: #ececec;
  border-left: 1px solid #fff;
}
.tablebox {
  flex: 1;
  min-height: 0;
  display: flex;
  flex-direction: column;
  border: 1px solid #666;
  background: #fff;
}
.rows {
  flex: 1;
  min-height: 0;
  overflow: hidden;
}
table {
  width: 100%;
  table-layout: fixed;
  border-collapse: separate;
  border-spacing: 0;
}
.c-name {
  width: 227px;
}
.c-path {
  width: 44px;
}
.c-tool {
  width: 105px;
}
.c-num {
  width: 45px;
}
th {
  height: 17px;
  padding: 0 0 0 5px;
  font-weight: 400;
  line-height: 16px;
  text-align: left;
  white-space: nowrap;
  overflow: hidden;
  background: linear-gradient(#fff 50%, #e4e4e4 50%);
  border-right: 1px solid #aaa;
  border-bottom: 1px solid #777;
}
td {
  height: 20px;
  padding: 0 0 0 3px;
  font-family: "Liberation Mono", monospace;
  font-size: 10px;
  white-space: nowrap;
  overflow: hidden;
  border-right: 1px solid #dcdcdc;
  border-bottom: 1px solid #e2e2e2;
}
td:first-child {
  border-right-color: #000;
}
th:last-child,
td:last-child {
  border-right: none;
  padding-left: 2px;
}
tr:nth-child(even) td {
  background: #f6f6f6;
}
.op td {
  color: #5a32a8;
}
tr.current td {
  background: #0078d7;
  color: #fff;
}
.hscroll {
  display: flex;
  height: 18px;
  padding: 1px 0;
  background: #f0f0f0;
}
.hscroll button {
  width: 18px;
}
.hscroll svg {
  width: 10px;
  height: 10px;
}
.track {
  flex: 1;
}
.thumb {
  width: 50%;
  height: 15px;
  background: #cdcdcd;
}
.splitter {
  height: 13px;
  display: flex;
  align-items: center;
  justify-content: center;
  background: linear-gradient(#ececec 6px, #aaa 6px, #aaa 7px, #ececec 7px);
}
.splitter i {
  width: 80px;
  height: 6px;
  background: #d6d6d6;
  border: 1px solid #aaa;
  border-width: 0 1px 1px 0;
  outline: 4px solid #ececec;
}

/* resource bar */
.resources {
  width: 32px;
  background: linear-gradient(90deg, #888, #adadad 3px);
}
.resources button {
  width: 28px;
  height: 41px;
  margin-bottom: 1px;
  border: 1px solid #777;
  border-left-color: #999;
  border-radius: 0 4px 4px 0;
  background: linear-gradient(90deg, #cacaca, #dcdcdc);
}
.resources svg {
  width: 24px;
  height: 24px;
}
.resources .opts {
  width: 32px;
  height: 30px;
  margin-bottom: 14px;
  border: none;
  background: none;
}
.resources .opts svg {
  width: 16px;
  height: 16px;
}
.resources .active {
  width: 30px;
  background: #ececec;
  border-left-color: #ececec;
}
.resources .apart {
  margin-top: 13px;
}

/* drilling dialog */
.dialog {
  position: absolute;
  top: 0;
  right: 215px;
  width: 290px;
  background: #ebebeb;
  border: 1px solid #666;
  border-top: none;
  border-bottom: 7px solid #1c1c1c;
  border-radius: 0 0 6px 6px;
}
.dlg-title {
  display: flex;
  height: 22px;
  background: linear-gradient(#3c3c3c, #141414 6px);
  color: #fff;
}
.dlg-title button {
  width: 21px;
}
.dlg-title svg {
  width: 14px;
  height: 14px;
}
.dlg-title h2 {
  flex: 1;
  margin: 0;
  padding-left: 8px;
  border: 1px solid #777;
  border-width: 0 1px;
  font-family: "Liberation Mono", "Noto Sans CJK SC", monospace;
  font-size: 13px;
  line-height: 22px;
}
.dlg-body {
  margin: 3px 5px 0 6px;
  border-right: 1px solid #999;
}
.sect {
  width: 100%;
  height: 23px;
  padding-left: 6px;
  justify-content: flex-start;
  border-bottom: 1px solid #8a8a8a;
  background: linear-gradient(#fdfdfd, #ececec 50%, #dadada 50%, #e2e2e2);
  font-size: 13px;
  font-weight: 700;
}
.sect::after {
  content: "";
  width: 23px;
  height: 22px;
  margin-left: auto;
  border-left: 1px solid #aaa;
  background-image: url("data:image/svg+xml,%3Csvg xmlns='http://www.w3.org/2000/svg' viewBox='0 0 22 22'%3E%3Cpath d='M6 7l5 8 5-8' fill='none' stroke='%23666' stroke-width='2.500'/%3E%3C/svg%3E");
}
.sect.up::after {
  background-image: url("data:image/svg+xml,%3Csvg xmlns='http://www.w3.org/2000/svg' viewBox='0 0 22 22'%3E%3Cpath d='M6 15l5-8 5 8' fill='none' stroke='%23666' stroke-width='2.500'/%3E%3C/svg%3E");
}
.sect.hot {
  color: #1150a8;
}
.sect.hot::after {
  background-image: url("data:image/svg+xml,%3Csvg xmlns='http://www.w3.org/2000/svg' viewBox='0 0 22 22'%3E%3Cpath d='M6 7l5 8 5-8' fill='none' stroke='%231f5fc4' stroke-width='3'/%3E%3C/svg%3E");
}
.fields {
  display: flex;
  flex-direction: column;
  gap: 4px;
  padding: 8px 8px 9px;
  background: #d3d3d3;
  box-shadow: inset 2px 2px 3px #b4b4b4;
}
.row {
  display: flex;
  align-items: center;
  gap: 4px;
}
.row > :first-child {
  margin-right: auto;
  line-height: 16px;
}
.row.first {
  align-items: flex-start;
}
.row.first > :first-child {
  line-height: 18px;
}
.fields button {
  width: 30px;
  height: 30px;
  border: 2px solid #8a8a8a;
  border-radius: 4px;
  background: linear-gradient(#f4f4f4, #e2e2e2 50%, #d0d0d0 50%, #efefef);
  box-shadow: 0 0 0 1px #f0f0f0;
}
.fields button:disabled {
  border-width: 1px;
  border-color: #aaa;
  background: #d6d6d6;
  color: #9a9a9c;
}
.fields .blue {
  color: #2458b8;
}
.fields svg {
  width: 23px;
  height: 23px;
}
.lens {
  fill: #a8a8a0;
}
.blue .lens {
  fill: #f8ec60;
}
.combo {
  position: relative;
  display: flex;
  width: 86px;
  height: 18px;
}
.combo.long {
  width: 106px;
}
.combo select {
  appearance: none;
  width: 100%;
  height: 18px;
  padding: 0 18px 0 2px;
  border: 1px solid #666;
  border-radius: 3px;
  background: #fff;
  font-family: "Liberation Mono", monospace;
  font-size: 10px;
  line-height: 16px;
  color: #000;
  overflow: hidden;
}
.combo.long select {
  font-family: "Noto Sans CJK SC", sans-serif;
  font-size: 12px;
}
.combo::after {
  content: "";
  position: absolute;
  top: 1px;
  right: 1px;
  width: 17px;
  height: 16px;
  background: linear-gradient(#e2efff, #5a9ae0);
  border-radius: 0 2px 2px 0;
}
.combo::before {
  content: "";
  position: absolute;
  z-index: 1;
  top: 6px;
  right: 4px;
  border: 5px solid transparent;
  border-top: 7px solid #111;
  border-bottom: none;
}
.row input {
  width: 56px;
  height: 16px;
  padding: 0 1px;
  border: 1px solid #666;
  border-radius: 3px;
  background: #fff;
  font-family: "Liberation Mono", monospace;
  font-size: 10px;
  text-align: right;
}
.row .picked {
  background: #0078d7;
  border-left: 3px solid #e8e8e8;
  color: #fff;
}
.actions {
  flex-direction: row;
  justify-content: center;
}
.collapse {
  width: 100%;
  height: 14px;
  background: linear-gradient(#fafafa, #dedede);
  border-bottom: 1px solid #999;
}
.collapse svg {
  width: 42px;
  height: 8px;
}
.dlg-foot {
  display: flex;
  justify-content: flex-end;
  gap: 7px;
  margin: 3px 6px 0;
  padding: 5px 10px 13px;
  border-top: 1px solid #aaa;
}
.dlg-foot button {
  width: 52px;
  height: 18px;
  border: 1px solid #555;
  border-radius: 4px;
  background: linear-gradient(#fff, #cfcfcf 50%, #f2f2f2);
}
.dlg-foot .ok {
  border-color: #2c6a2c;
  background: linear-gradient(#dff5cf, #78d058 50%, #c0f0a0);
}

/* click highlight over the dialog */
.highlight {
  position: absolute;
  right: 338px;
  top: 188px;
  width: 58px;
  height: 58px;
  border-radius: 50%;
  background: #f6ee10;
  mix-blend-mode: multiply;
  pointer-events: none;
}
.hand {
  position: absolute;
  right: 352px;
  top: 216px;
  width: 20px;
  height: 26px;
  pointer-events: none;
}

.bottom {
  border-top: 1px solid #f4f4f4;
}
.status {
  display: flex;
  height: 22px;
  flex-shrink: 0;
  border-top: 1px solid #f4f4f4;
  background: #d8d8d8;
  font-family: "Liberation Mono", "Noto Sans CJK SC", monospace;
  font-weight: 700;
  line-height: 20px;
}
.cue {
  width: 618px;
  padding-left: 3px;
  border-right: 1px solid #f4f4f4;
  font-size: 13px;
}
.now {
  flex: 1;
  padding-left: 4px;
}
.cell {
  width: 19px;
  border-left: 1px solid #f4f4f4;
}
.screen {
  width: 56px;
  padding: 2px 3px;
}
.screen svg {
  width: 16px;
  height: 16px;
}
.end {
  width: 18px;
}
```
